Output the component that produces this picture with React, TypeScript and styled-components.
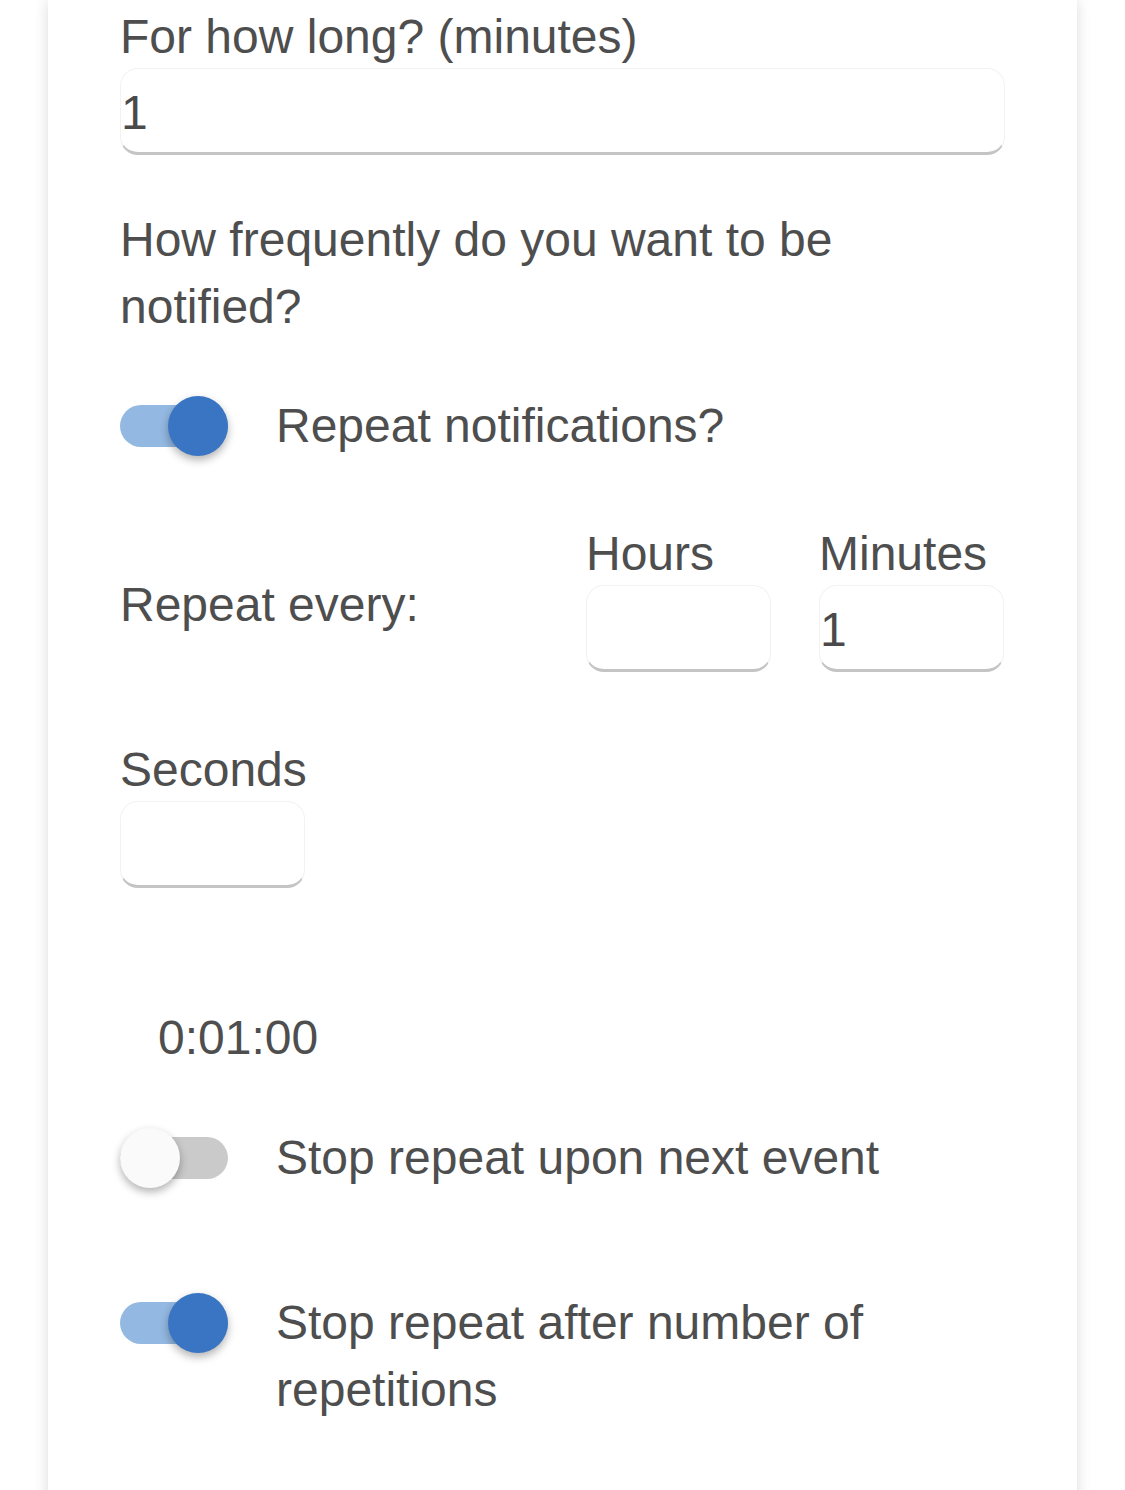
import styled, { createGlobalStyle } from 'styled-components';

const GlobalStyle = createGlobalStyle`
  html, body {
    margin: 0;
    padding: 0;
    background: #ffffff;
  }
  body {
    font-family: 'Liberation Sans', Arial, Helvetica, sans-serif;
    color: #4e4e4e;
    font-size: 48px;
    line-height: 67px;
  }
  * {
    box-sizing: border-box;
  }
`;

type SwitchProps = { on: boolean };

const Switch = ({ on }: SwitchProps) => (
  <SwitchRoot type='button' role='switch' aria-checked={on}>
    <Track $on={on} />
    <Knob $on={on} />
  </SwitchRoot>
);

const App = () => {
  return (
    <>
      <GlobalStyle />
      <Page>
        <Card>
          <Field>
            <FieldLabel>For how long? (minutes)</FieldLabel>
            <Input defaultValue='1' />
          </Field>

          <Question>How frequently do you want to be notified?</Question>

          <ToggleRow $mt={52}>
            <Switch on />
            <ToggleLabel>Repeat notifications?</ToggleLabel>
          </ToggleRow>

          <RepeatGrid>
            <RepeatLabel>Repeat every:</RepeatLabel>
            <Field $width={185}>
              <FieldLabel>Hours</FieldLabel>
              <Input defaultValue='' />
            </Field>
            <Field $width={185}>
              <FieldLabel>Minutes</FieldLabel>
              <Input defaultValue='1' />
            </Field>
            <Field $width={185}>
              <FieldLabel>Seconds</FieldLabel>
              <Input defaultValue='' />
            </Field>
          </RepeatGrid>

          <Duration>0:01:00</Duration>

          <ToggleRow $mt={53}>
            <Switch on={false} />
            <ToggleLabel>Stop repeat upon next event</ToggleLabel>
          </ToggleRow>

          <ToggleRow $mt={98}>
            <Switch on />
            <ToggleLabel>Stop repeat after number of repetitions</ToggleLabel>
          </ToggleRow>
        </Card>
      </Page>
    </>
  );
};

const Page = styled.div`
  padding: 0 48px;
  height: 1490px;
  overflow: hidden;
`;

const Card = styled.div`
  background: #fff;
  min-height: 1600px;
  padding: 6px 72px 0 72px;
  box-shadow: 0 0 14px rgba(0, 0, 0, 0.14);
  display: flex;
  flex-direction: column;
`;

const Field = styled.div<{ $width?: number }>`
  display: flex;
  flex-direction: column;
  width: ${({ $width }) => ($width ? `${$width}px` : '100%')};
`;

const FieldLabel = styled.label`
  line-height: 62px;
  white-space: nowrap;
`;

const Input = styled.input`
  width: 100%;
  height: 87px;
  margin: 0;
  padding: 4px 0 0;
  font-family: inherit;
  font-size: 48px;
  color: #4a4a4a;
  background: #fff;
  border: 1px solid #f2f2f2;
  border-bottom: 3px solid #c4c4c4;
  border-radius: 18px;
  outline: none;
`;

const Question = styled.p`
  margin: 51px 0 0;
`;

const ToggleRow = styled.div<{ $mt: number }>`
  display: flex;
  align-items: flex-start;
  gap: 48px;
  margin-top: ${({ $mt }) => $mt}px;
`;

const ToggleLabel = styled.span`
  flex: 1;
`;

const SwitchRoot = styled.button`
  position: relative;
  flex: 0 0 108px;
  width: 108px;
  height: 60px;
  margin-top: 4px;
  padding: 0;
  border: none;
  background: transparent;
  display: flex;
  align-items: center;
`;

const Track = styled.span<{ $on: boolean }>`
  display: block;
  width: 108px;
  height: 42px;
  border-radius: 21px;
  background: ${({ $on }) => ($on ? '#93b8e1' : '#cacaca')};
`;

const Knob = styled.span<{ $on: boolean }>`
  position: absolute;
  top: 0;
  left: ${({ $on }) => ($on ? '48px' : '0')};
  width: 60px;
  height: 60px;
  border-radius: 50%;
  background: ${({ $on }) => ($on ? '#3a75c4' : '#fafafa')};
  box-shadow: 0 4px 9px rgba(0, 0, 0, 0.3);
`;

const RepeatGrid = styled.div`
  display: flex;
  flex-wrap: wrap;
  align-items: center;
  column-gap: 48px;
  row-gap: 67px;
  margin-top: 64px;
`;

const RepeatLabel = styled.span`
  flex: 0 0 418px;
  margin-top: 13px;
`;

const Duration = styled.div`
  margin-top: 116px;
  padding-left: 38px;
`;

export default App;
